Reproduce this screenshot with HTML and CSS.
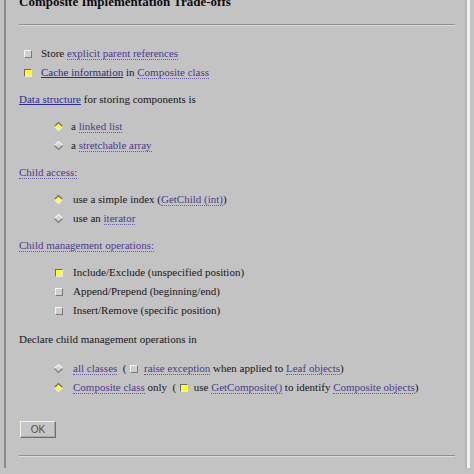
FILE: index.html
```html
<!DOCTYPE html>
<html>
<head>
<meta charset="utf-8">
<link rel="stylesheet" href="styles.css">
</head>
<body>
<div class="frame">
  <h1 class="title">Composite Implementation Trade-offs</h1>
  <div class="rule"></div>

  <div class="opts top">
    <div class="opt"><span class="cb"></span><span class="txt">Store <a class="dl">explicit parent references</a></span></div>
    <div class="opt"><span class="cb on"></span><span class="txt"><a class="sl">Cache information</a> in <a class="dl">Composite class</a></span></div>
  </div>

  <p class="para"><a class="sl">Data structure</a> for storing components is</p>
  <div class="opts">
    <div class="opt"><svg class="rd" viewBox="0 0 9 9"><polygon points="4.5,0.5 8.5,4.5 4.5,8.5 0.5,4.5" fill="#ffff30"/><polyline points="0.5,4.5 4.5,0.5 8.5,4.5" fill="none" stroke="#6a6a6a" stroke-width="1.2"/><polyline points="0.5,4.5 4.5,8.5 8.5,4.5" fill="none" stroke="#ececec" stroke-width="1.2"/></svg><span class="txt tight">a <a class="dl">linked list</a></span></div>
    <div class="opt"><svg class="rd" viewBox="0 0 9 9"><polygon points="4.5,0.5 8.5,4.5 4.5,8.5 0.5,4.5" fill="#d2d2d2"/><polyline points="0.5,4.5 4.5,0.5 8.5,4.5" fill="none" stroke="#f4f4f4" stroke-width="1.2"/><polyline points="0.5,4.5 4.5,8.5 8.5,4.5" fill="none" stroke="#7c7c7c" stroke-width="1.2"/></svg><span class="txt tight">a <a class="dl">stretchable array</a></span></div>
  </div>

  <p class="para"><a class="dl">Child access:</a></p>
  <div class="opts">
    <div class="opt"><svg class="rd" viewBox="0 0 9 9"><polygon points="4.5,0.5 8.5,4.5 4.5,8.5 0.5,4.5" fill="#ffff30"/><polyline points="0.5,4.5 4.5,0.5 8.5,4.5" fill="none" stroke="#6a6a6a" stroke-width="1.2"/><polyline points="0.5,4.5 4.5,8.5 8.5,4.5" fill="none" stroke="#ececec" stroke-width="1.2"/></svg><span class="txt">use a simple index (<a class="dl">GetChild (int)</a>)</span></div>
    <div class="opt"><svg class="rd" viewBox="0 0 9 9"><polygon points="4.5,0.5 8.5,4.5 4.5,8.5 0.5,4.5" fill="#d2d2d2"/><polyline points="0.5,4.5 4.5,0.5 8.5,4.5" fill="none" stroke="#f4f4f4" stroke-width="1.2"/><polyline points="0.5,4.5 4.5,8.5 8.5,4.5" fill="none" stroke="#7c7c7c" stroke-width="1.2"/></svg><span class="txt">use an <a class="dl">iterator</a></span></div>
  </div>

  <p class="para"><a class="dl">Child management operations:</a></p>
  <div class="opts">
    <div class="opt"><span class="cb on"></span><span class="txt">Include/Exclude (unspecified position)</span></div>
    <div class="opt"><span class="cb"></span><span class="txt">Append/Prepend (beginning/end)</span></div>
    <div class="opt"><span class="cb"></span><span class="txt">Insert/Remove (specific position)</span></div>
  </div>

  <p class="para wide">Declare child management operations in</p>
  <div class="opts wide">
    <div class="opt"><svg class="rd" viewBox="0 0 9 9"><polygon points="4.5,0.5 8.5,4.5 4.5,8.5 0.5,4.5" fill="#d2d2d2"/><polyline points="0.5,4.5 4.5,0.5 8.5,4.5" fill="none" stroke="#f4f4f4" stroke-width="1.2"/><polyline points="0.5,4.5 4.5,8.5 8.5,4.5" fill="none" stroke="#7c7c7c" stroke-width="1.2"/></svg><span class="txt"><a class="dl">all classes</a> &nbsp;( <span class="cb inl"></span> <a class="dl">raise exception</a> when applied to <a class="dl">Leaf objects</a>)</span></div>
    <div class="opt"><svg class="rd" viewBox="0 0 9 9"><polygon points="4.5,0.5 8.5,4.5 4.5,8.5 0.5,4.5" fill="#ffff30"/><polyline points="0.5,4.5 4.5,0.5 8.5,4.5" fill="none" stroke="#6a6a6a" stroke-width="1.2"/><polyline points="0.5,4.5 4.5,8.5 8.5,4.5" fill="none" stroke="#ececec" stroke-width="1.2"/></svg><span class="txt"><a class="dl">Composite class</a> only &nbsp;( <span class="cb on inl"></span> use <a class="dl">GetComposite()</a> to identify <a class="dl">Composite objects</a>)</span></div>
  </div>

  <div class="actions"><button class="ok" type="button">OK</button></div>
  <div class="rule bottom"></div>
</div>
</body>
</html>
```

FILE: styles.css
```css
html, body {
  margin: 0;
  padding: 0;
  background: #c3c3c3;
}
body {
  font-family: "Liberation Serif", "Times New Roman", serif;
  font-size: 11px;
  color: #161616;
  overflow: hidden;
}
.frame {
  box-sizing: border-box;
  width: 466px;
  min-height: 474px;
  margin-left: 4px;
  border-left: 2px solid #8c8c8c;
  border-right: 3px solid #f2f2f2;
  box-shadow: inset -2px 0 0 #b6b6b6;
  padding: 0 12px 0 13px;
}
.title {
  margin: -6px 0 0 0;
  font-size: 13px;
  line-height: 16px;
  font-weight: bold;
  color: #0c0c0c;
}
.rule {
  margin-top: 14px;
  height: 0;
  border-top: 1px solid #8e8e8e;
  border-bottom: 1px solid #dcdcdc;
}
.rule.bottom {
  margin-top: 17px;
}
.opts {
  margin-top: 8px;
  padding-left: 36px;
}
.opts.top {
  margin-top: 18px;
  padding-left: 5px;
}
.opts.wide {
  margin-top: 10px;
}
.opt {
  display: flex;
  align-items: center;
  height: 19px;
  white-space: nowrap;
}
.txt {
  margin-left: 10px;
  line-height: 19px;
}
.txt.tight {
  margin-left: 8px;
}
.opts.top .txt {
  margin-left: 9px;
}
.para {
  margin: 8px 0 0 0;
  line-height: 19px;
  height: 19px;
}
.para.wide {
  margin-top: 10px;
}
.cb {
  display: inline-block;
  box-sizing: border-box;
  width: 8px;
  height: 8px;
  flex: none;
  background: #cfcfcf;
  border: 1px solid;
  border-color: #f4f4f4 #7a7a7a #7a7a7a #f4f4f4;
}
.cb.on {
  background: #ffff20;
  border-color: #6a6a6a #e8e8e8 #e8e8e8 #6a6a6a;
}
.cb.inl {
  vertical-align: -1px;
  margin: 0 3px 0 1px;
}
.rd {
  width: 9px;
  height: 9px;
  flex: none;
  margin-left: -1px;
}
a {
  cursor: pointer;
}
.sl {
  color: #2c2c8e;
  text-decoration: underline;
}
.dl {
  color: #4d3a8c;
  text-decoration: none;
  border-bottom: 1px dotted #6a5aa0;
  padding-bottom: 0;
}
.actions {
  margin-top: 24px;
  padding-left: 1px;
}
.ok {
  display: block;
  box-sizing: border-box;
  width: 36px;
  height: 17px;
  padding: 0;
  background: #c6c6c6;
  border: 1px solid;
  border-color: #f2f2f2 #6e6e6e #6e6e6e #f2f2f2;
  box-shadow: inset -1px -1px 0 #a8a8a8;
  font-family: "Liberation Sans", Arial, sans-serif;
  font-size: 10px;
  color: #5a4a4e;
}
```
